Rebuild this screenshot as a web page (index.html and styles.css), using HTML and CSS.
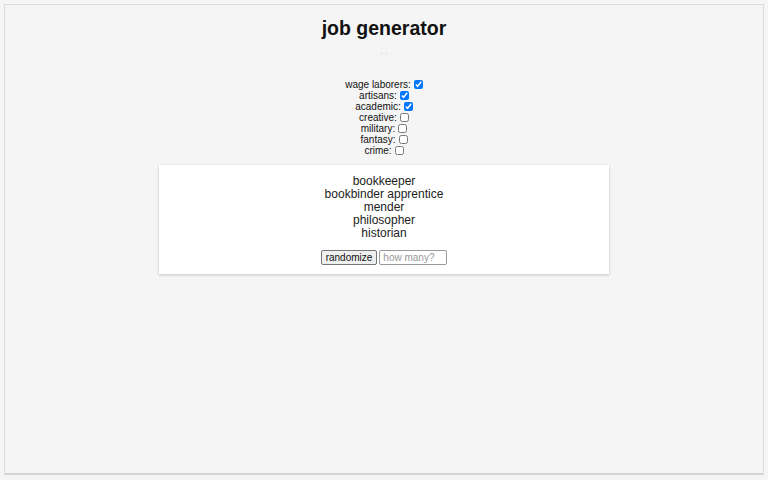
FILE: index.html
```html
<!DOCTYPE html>
<html>
<head>
    <title>job generator</title>
    <link rel="stylesheet" href="styles.css">
</head>
<body>
    <div class="frame">
        <h1>job generator</h1>
        <div class="sub">. .</div>

        <div class="options">
            <label>wage laborers: <input type="checkbox" checked></label>
            <label>artisans: <input type="checkbox" checked></label>
            <label>academic: <input type="checkbox" checked></label>
            <label>creative: <input type="checkbox"></label>
            <label>military: <input type="checkbox"></label>
            <label>fantasy: <input type="checkbox"></label>
            <label>crime: <input type="checkbox"></label>
        </div>

        <div class="card">
            <div id="jobs">
                <div>bookkeeper</div>
                <div>bookbinder apprentice</div>
                <div>mender</div>
                <div>philosopher</div>
                <div>historian</div>
            </div>
            <div class="controls">
                <button id="randomize">randomize</button>
                <input type="text" id="count" placeholder="how many?">
            </div>
        </div>
    </div>
</body>
</html>
```

FILE: styles.css
```css
html, body {
    margin: 0;
    background-color: #f5f5f5;
}
body {
    font-family: "Liberation Sans", Arial, sans-serif;
    padding: 4px;
    color: #111;
}
.frame {
    height: 468px;
    border: 1px solid #dcdcdc;
    border-bottom: 2px solid #d4d4d4;
    text-align: center;
}
h1 {
    font-size: 19.5px;
    margin: 12px 0 0;
    line-height: 23px;
}
.sub {
    font-size: 9px;
    color: #c4c4c4;
    margin-top: 6px;
    line-height: 10px;
}
.options {
    margin-top: 23px;
    display: flex;
    flex-direction: column;
    align-items: center;
    font-size: 10px;
    line-height: 11px;
}
.options label {
    display: flex;
    align-items: center;
    height: 11px;
}
.options input {
    width: 9px;
    height: 9px;
    margin: 0 0 0 3px;
}
.card {
    width: 450px;
    margin: 9px auto 0;
    background-color: #fff;
    box-shadow: 0 1px 3px rgba(0, 0, 0, 0.2);
    padding: 10px 0 9px;
}
#jobs {
    font-size: 12px;
    line-height: 13px;
    color: #222;
}
.controls {
    margin-top: 10px;
    display: flex;
    justify-content: center;
    gap: 2px;
}
#randomize {
    font-family: "Liberation Sans", Arial, sans-serif;
    font-size: 10px;
    height: 15px;
    padding: 0 4px;
    border: 1px solid #767676;
    border-radius: 2px;
    background-color: #efefef;
    color: #111;
}
#count {
    font-family: "Liberation Sans", Arial, sans-serif;
    font-size: 10px;
    width: 68px;
    height: 15px;
    box-sizing: border-box;
    padding: 0 3px;
    border: 1px solid #999;
    border-radius: 2px;
}
#count::placeholder {
    color: #999;
}
```
